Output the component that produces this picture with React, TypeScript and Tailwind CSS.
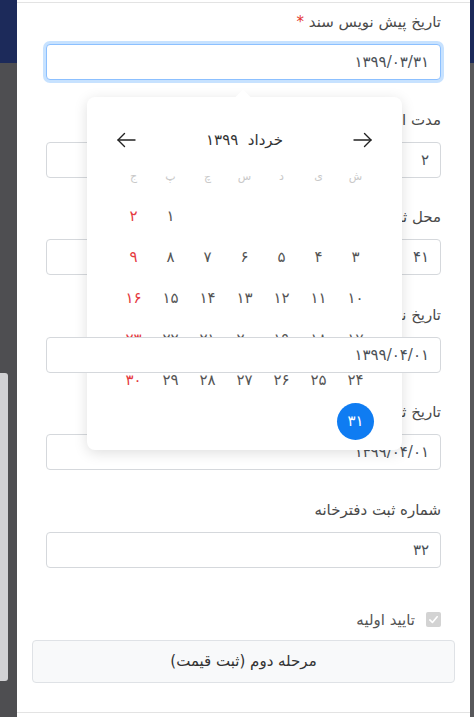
import React from 'react';

const FA = '۰۱۲۳۴۵۶۷۸۹';
const toFa = (n: number | string) => String(n).replace(/\d/g, (d) => FA[Number(d)]);

interface Field {
  label: string;
  value: string;
  required?: boolean;
  focused?: boolean;
  raised?: boolean;
}

const fields: Field[] = [
  { label: 'تاریخ پیش نویس سند', value: '۱۳۹۹/۰۳/۳۱', required: true, focused: true },
  { label: 'مدت اعتبار', value: '۲' },
  { label: 'محل ثبت', value: '۴۱' },
  { label: 'تاریخ نقل و انتقال', value: '۱۳۹۹/۰۴/۰۱', raised: true },
  { label: 'تاریخ ثبت', value: '۱۳۹۹/۰۴/۰۱' },
  { label: 'شماره ثبت دفترخانه', value: '۳۲' },
];

const weekDays = ['ش', 'ی', 'د', 'س', 'چ', 'پ', 'ج'];

function Arrow({ dir }: { dir: 'left' | 'right' }) {
  return (
    <svg width="20" height="16" viewBox="0 0 20 16" fill="none" stroke="#222" strokeWidth="1.4" strokeLinecap="round" strokeLinejoin="round">
      {dir === 'left' ? (
        <>
          <path d="M19 8H2" />
          <path d="M8.5 1.5 2 8l6.5 6.5" />
        </>
      ) : (
        <>
          <path d="M1 8h17" />
          <path d="M11.5 1.5 18 8l-6.5 6.5" />
        </>
      )}
    </svg>
  );
}

function Calendar() {
  // Khordad 1399 starts on Thursday (column 6 in RTL order)
  const cells: (number | null)[] = [null, null, null, null, null];
  for (let d = 1; d <= 31; d++) cells.push(d);
  while (cells.length % 7) cells.push(null);

  return (
    <div className="absolute left-[70px] top-[97px] z-10 h-[353px] w-[315px] rounded-lg bg-white px-[28px] pt-[25px] shadow-[0_3px_14px_rgba(0,0,0,0.13)]">
      <div className="absolute left-[150px] top-[-5px] h-3 w-3 rotate-45 bg-white" />
      <div className="flex h-[36px] items-center justify-between px-[1px]">
        <Arrow dir="left" />
        <div dir="rtl" className="text-[15px] text-[#333]">
          خرداد&nbsp;&nbsp;{toFa(1399)}
        </div>
        <Arrow dir="right" />
      </div>
      <div dir="rtl" className="grid grid-cols-7">
        {weekDays.map((w) => (
          <div key={w} className="flex h-[38px] items-center justify-center text-[11px] text-[#c9c9c9]">
            {w}
          </div>
        ))}
        {cells.map((d, i) => {
          const friday = i % 7 === 6;
          const selected = d === 31;
          return (
            <div key={i} className="flex h-[41px] items-center justify-center">
              {d !== null &&
                (selected ? (
                  <span className="flex h-[37px] w-[37px] items-center justify-center rounded-full bg-[#0f7cf2] text-[15px] text-white">
                    {toFa(d)}
                  </span>
                ) : (
                  <span className={`text-[15px] ${friday ? 'text-[#e53a40]' : 'text-[#555]'}`}>{toFa(d)}</span>
                ))}
            </div>
          );
        })}
      </div>
    </div>
  );
}

export default function App() {
  return (
    <div className="flex h-[717px] w-[474px] overflow-hidden bg-[#525255] font-['DejaVu_Sans',sans-serif]">
      <div className="flex w-[17px] shrink-0 flex-col">
        <div className="h-[63px] bg-[#1c2a5a]" />
        <div className="flex-1 bg-[#4e4e51]">
          <div className="mt-[310px] h-[308px] w-[8px] rounded-r-[3px] bg-[#d1d1d4]" />
        </div>
      </div>

      <div className="relative flex w-[453px] shrink-0 flex-col bg-white">
        <div className="h-[3px] border-b border-[#e3e3e3]" />
        <div dir="rtl" className="px-[29px] pt-[7px]">
          {fields.map((f) => (
            <div key={f.label} className="mb-[27.6px]">
              <div className="mb-[10px] h-6 text-[15px] leading-6 text-[#4a4a4a]">
                {f.label}
                {f.required && <span className="text-[#e3342f]"> *</span>}
              </div>
              <input
                readOnly
                value={f.value}
                className={`block h-[36px] w-full rounded-[4px] border bg-white px-[11px] text-right text-[15px] text-[#495057] outline-none ${
                  f.focused
                    ? 'border-[#8cc0ff] shadow-[0_0_0_3px_rgba(0,123,255,0.22)]'
                    : 'border-[#d5d8dc]'
                } ${f.raised ? 'relative z-20' : ''}`}
              />
            </div>
          ))}

          <div className="mt-[42px] flex h-[20px] items-center gap-[11px]">
            <span className="flex h-[15px] w-[15px] items-center justify-center rounded-[2px] bg-[#d3d3d3]">
              <svg width="11" height="11" viewBox="0 0 12 12" fill="none" stroke="#fff" strokeWidth="1.8" strokeLinecap="round" strokeLinejoin="round">
                <path d="M2 6.5 4.8 9.2 10 3" />
              </svg>
            </span>
            <span className="text-[15px] text-[#555]">تایید اولیه</span>
          </div>
        </div>

        <div className="mx-[15px] mt-[10px] flex h-[43px] items-center justify-center rounded-[4px] border border-[#dfe2e6] bg-[#f8f9fa] text-[15px] text-[#333]" dir="rtl">
          مرحله دوم (ثبت قیمت)
        </div>

        <div className="mt-auto mb-[4px] border-t border-[#e3e3e3]" />

        <Calendar />
      </div>

      <div className="flex w-[4px] shrink-0 flex-col">
        <div className="h-[63px] bg-[#1c2a5a]" />
        <div className="flex-1 bg-[#58585b]" />
      </div>
    </div>
  );
}
